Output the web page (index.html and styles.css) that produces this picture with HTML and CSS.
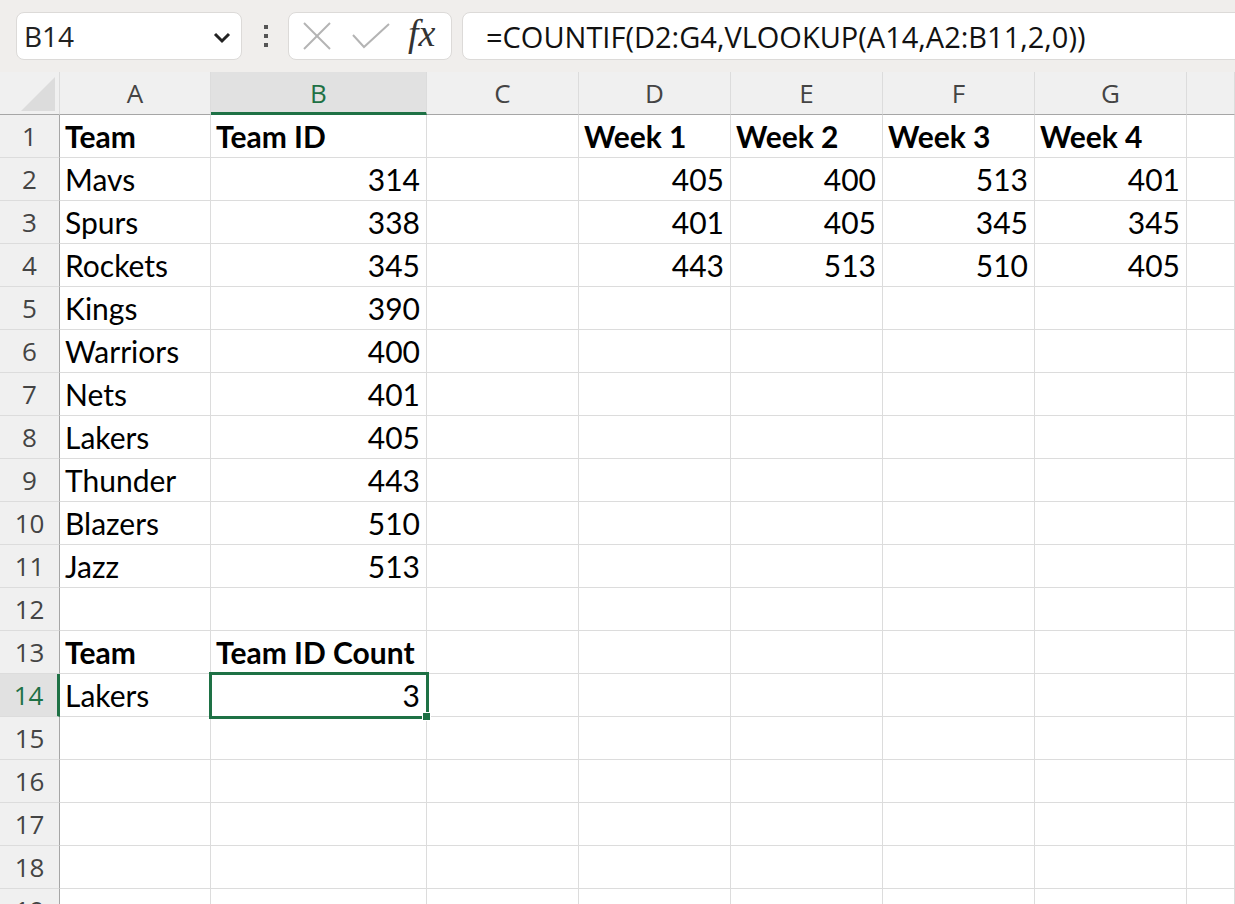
FILE: index.html
```html
<!DOCTYPE html>
<html lang="en">
<head>
    <meta charset="UTF-8">
    <title>Book1 - Excel</title>
    <link rel="stylesheet" href="styles.css">
</head>
<body>
    <div class="toolbar">
        <div class="name-box">
            <span>B14</span>
            <svg class="chevron" width="20" height="12" viewBox="0 0 20 12"><polyline points="3,2 10,9 17,2" fill="none" stroke="#222" stroke-width="3"/></svg>
        </div>
        <div class="dots"><i></i><i></i><i></i></div>
        <div class="fx-box">
            <svg width="30" height="28" viewBox="0 0 30 28"><line x1="2" y1="1" x2="28" y2="27" stroke="#b4b4b4" stroke-width="2"/><line x1="28" y1="1" x2="2" y2="27" stroke="#b4b4b4" stroke-width="2"/></svg>
            <svg width="38" height="26" viewBox="0 0 38 26"><polyline points="1,12 12,24 37,1" fill="none" stroke="#b4b4b4" stroke-width="2"/></svg>
            <span class="fx">fx</span>
        </div>
        <div class="formula">=COUNTIF(D2:G4,VLOOKUP(A14,A2:B11,2,0))</div>
    </div>

    <div class="sheet" id="sheet"></div>

    <script>
        const cols = ['A', 'B', 'C', 'D', 'E', 'F', 'G', 'H'];
        const data = {
            1: ['Team', 'Team ID', '', 'Week 1', 'Week 2', 'Week 3', 'Week 4'],
            2: ['Mavs', 314, '', 405, 400, 513, 401],
            3: ['Spurs', 338, '', 401, 405, 345, 345],
            4: ['Rockets', 345, '', 443, 513, 510, 405],
            5: ['Kings', 390],
            6: ['Warriors', 400],
            7: ['Nets', 401],
            8: ['Lakers', 405],
            9: ['Thunder', 443],
            10: ['Blazers', 510],
            11: ['Jazz', 513],
            13: ['Team', 'Team ID Count'],
            14: ['Lakers', 3]
        };
        const boldRows = [1, 13];

        const sheet = document.getElementById('sheet');
        let html = '<div class="corner"></div>';
        cols.forEach(c => {
            html += `<div class="col-head${c === 'B' ? ' sel' : ''}">${c === 'H' ? '' : c}</div>`;
        });

        for (let r = 1; r <= 19; r++) {
            html += `<div class="row-head${r === 14 ? ' sel' : ''}">${r}</div>`;
            const row = data[r] || [];
            for (let c = 0; c < cols.length; c++) {
                const v = row[c] === undefined ? '' : row[c];
                let cls = 'cell';
                if (typeof v === 'number') cls += ' num';
                if (boldRows.includes(r)) cls += ' bold';
                if (r === 14 && c === 1) cls += ' active';
                html += `<div class="${cls}">${v}</div>`;
            }
        }
        sheet.innerHTML = html;
    </script>
</body>
</html>
```

FILE: styles.css
```css
body {
    margin: 0;
    background: #fff;
    overflow: hidden;
    height: 904px;
}

/* barre de formule */
.toolbar {
    height: 72px;
    box-sizing: border-box;
    background: #f0eeec;
    display: flex;
    align-items: center;
    padding: 0 0 0 16px;
    overflow: hidden;
}

.name-box, .fx-box, .formula {
    height: 48px;
    box-sizing: border-box;
    background: #fff;
    border: 1px solid #dcdad8;
    border-radius: 8px;
    display: flex;
    align-items: center;
    font-family: "Open Sans", sans-serif;
    font-size: 28px;
    color: #222;
}

.name-box {
    width: 226px;
    padding: 0 9px 0 7px;
    justify-content: space-between;
}

.chevron {
    margin-top: 3px;
}

.dots {
    width: 4px;
    margin: 0 20px 0 22px;
    display: flex;
    flex-direction: column;
    gap: 5px;
}

.dots i {
    display: block;
    width: 4px;
    height: 4px;
    background: #555;
}

.fx-box {
    width: 164px;
    padding: 0 10px 0 13px;
    gap: 20px;
}

.fx {
    font-family: "Liberation Serif", serif;
    font-style: italic;
    font-size: 38px;
    color: #333;
    margin-top: -6px;
    margin-left: -2px;
}

.formula {
    flex: 1;
    margin-left: 10px;
    margin-right: -20px;
    padding-left: 23px;
    font-size: 29px;
    color: #111;
}

/* grille */
.sheet {
    display: grid;
    grid-template-columns: 60px 151px 216px repeat(5, 152px) 1fr;
    grid-auto-rows: 43px;
}

.sheet div {
    box-sizing: border-box;
    border-right: 1px solid #dcdcdc;
    border-bottom: 1px solid #dcdcdc;
    overflow: hidden;
    white-space: nowrap;
}

.corner {
    background: #f0f0f0;
    position: relative;
    border-bottom-color: #a6a6a6 !important;
}

.corner::after {
    content: '';
    position: absolute;
    right: 4px;
    bottom: 3px;
    border-style: solid;
    border-width: 0 0 34px 34px;
    border-color: transparent transparent #dcdcdc transparent;
}

.col-head, .row-head {
    background: #f0f0f0;
    font-family: "Open Sans", sans-serif;
    font-size: 26px;
    color: #444;
    text-align: center;
    line-height: 42px;
}

.col-head {
    border-bottom-color: #a6a6a6 !important;
}

.row-head {
    border-right-color: #a6a6a6 !important;
    line-height: 43px;
}

.col-head.sel {
    background: #e1e1e1;
    color: #1e7145;
    border-bottom: 3px solid #1e7145 !important;
}

.row-head.sel {
    background: #e1e1e1;
    color: #1e7145;
    border-right: 3px solid #1e7145 !important;
}

.cell {
    font-family: Lato, "Liberation Sans", sans-serif;
    font-size: 30px;
    color: #000;
    line-height: 43px;
    padding: 0 6px 0 5px;
}

.cell.num {
    text-align: right;
}

.cell.bold {
    font-weight: bold;
}

.cell.active {
    position: relative;
    overflow: visible;
    outline: 3px solid #1e7145;
    outline-offset: -1px;
}

.cell.active::after {
    content: '';
    position: absolute;
    right: -5px;
    bottom: -5px;
    width: 7px;
    height: 7px;
    background: #1e7145;
    border: 1px solid #fff;
}
```
